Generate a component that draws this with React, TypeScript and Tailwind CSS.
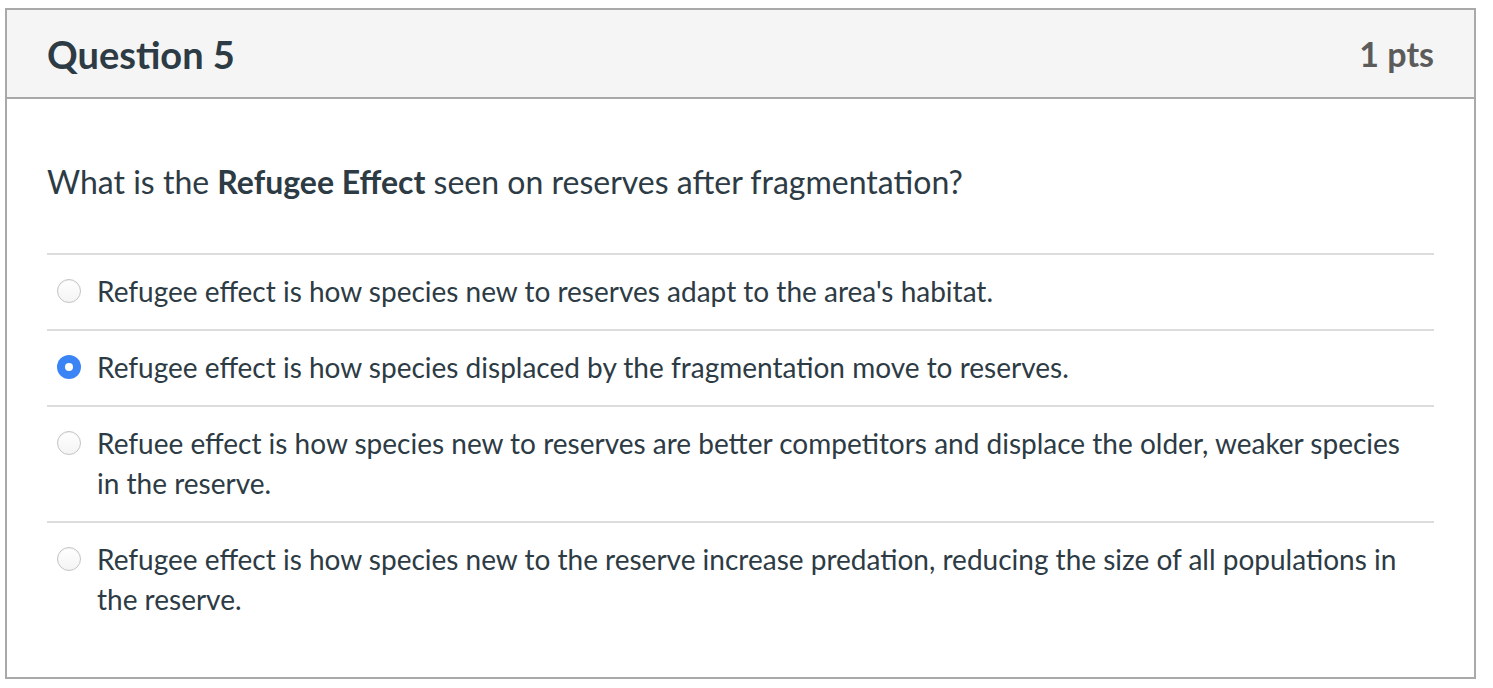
const answers = [
  { id: 'a1', text: "Refugee effect is how species new to reserves adapt to the area's habitat.", checked: false },
  { id: 'a2', text: 'Refugee effect is how species displaced by the fragmentation move to reserves.', checked: true },
  {
    id: 'a3',
    text: 'Refuee effect is how species new to reserves are better competitors and displace the older, weaker species in the reserve.',
    checked: false,
  },
  {
    id: 'a4',
    text: 'Refugee effect is how species new to the reserve increase predation, reducing the size of all populations in the reserve.',
    checked: false,
  },
];

function Radio({ checked }: { checked: boolean }) {
  if (checked) {
    return (
      <span className="flex h-6 w-6 shrink-0 items-center justify-center rounded-full bg-[#3b84f6]">
        <span className="h-2 w-2 rounded-full bg-white" />
      </span>
    );
  }
  return (
    <span className="h-6 w-6 shrink-0 rounded-full border border-[#c4c4c4] bg-gradient-to-b from-white to-[#f4f4f4] shadow-[inset_0_1px_1px_rgba(0,0,0,0.05)]" />
  );
}

export default function App() {
  return (
    <div className="min-h-screen bg-white pl-[5px] pt-2 font-['Lato','Liberation_Sans',sans-serif] text-[#2d3b45]">
      <div className="h-[671px] w-[1471px] border-2 border-[#a9a9a9]">
        {/* Header */}
        <div className="flex h-[89px] items-center justify-between border-b-2 border-[#a9a9a9] bg-[#f5f5f5] px-10">
          <h2 className="text-[38px] font-bold leading-none">Question 5</h2>
          <span className="text-[34px] font-bold leading-none text-[#5b5b5b]">1 pts</span>
        </div>

        {/* Body */}
        <div className="px-10 pt-[60px]">
          <p className="mb-[49px] text-[32px] leading-[45px]">
            What is the <strong className="font-bold">Refugee Effect</strong> seen on reserves after fragmentation?
          </p>
          <ul>
            {answers.map((answer) => (
              <li
                key={answer.id}
                className="flex items-start gap-4 border-t-2 border-[#dcdcdc] pt-4 pb-[18px] pl-[10px] pr-[28px]"
              >
                <span className="flex h-10 items-center">
                  <Radio checked={answer.checked} />
                </span>
                <span className="text-[28px] leading-10">{answer.text}</span>
              </li>
            ))}
          </ul>
        </div>
      </div>
    </div>
  );
}
